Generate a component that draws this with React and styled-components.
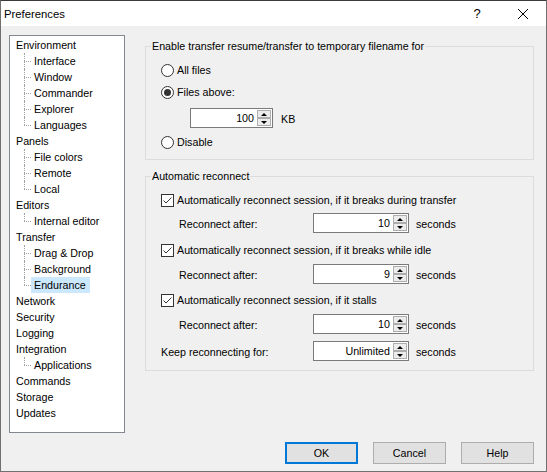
import React from 'react';
import styled, { createGlobalStyle, css } from 'styled-components';

const GlobalStyle = createGlobalStyle`
  html, body {
    margin: 0;
    padding: 0;
    background: #f0f0f0;
  }
  body {
    font-family: "Liberation Sans", Arial, sans-serif;
    font-size: 10.7px;
    color: #000;
  }
`;

const Window = styled.div`
  width: 547px;
  height: 472px;
  box-sizing: border-box;
  border: 1px solid #707070;
  border-top-color: #3a3a3a;
  background: #f0f0f0;
  display: flex;
  flex-direction: column;
`;

const TitleBar = styled.div`
  height: 25px;
  background: #fff;
  display: flex;
  align-items: center;
  padding-left: 3px;
  font-size: 11.3px;
`;

const TitleText = styled.div`
  flex: 1;
`;

const TitleButton = styled.div`
  width: 46px;
  height: 25px;
  display: flex;
  align-items: center;
  justify-content: center;
  font-size: 13px;
`;

const Body = styled.div`
  flex: 1;
  display: flex;
  flex-direction: column;
  padding: 9px 12px 0 8px;
`;

const Main = styled.div`
  display: flex;
  gap: 20px;
  height: 398px;
`;

// navigation tree on the left
const Tree = styled.div`
  width: 116px;
  height: 398px;
  box-sizing: border-box;
  border: 1px solid #828790;
  background: #fff;
  padding-top: 1px;
`;

const TreeItem = styled.div`
  position: relative;
  width: fit-content;
  height: 16px;
  line-height: 17px;
  white-space: nowrap;
  margin-left: ${p => (p.$child ? 21 : 3)}px;
  padding: 0 4px 0 3px;
  background: ${p => (p.$selected ? '#cce8ff' : 'transparent')};

  ${p => p.$child && css`
    &::before {
      content: '';
      position: absolute;
      left: -7px;
      top: 8px;
      width: 7px;
      border-top: 1px dotted #a0a0a0;
    }
    &::after {
      content: '';
      position: absolute;
      left: -7px;
      top: 0;
      height: ${p.$last ? 8 : 16}px;
      border-left: 1px dotted #a0a0a0;
    }
  `}
`;

const Pane = styled.div`
  flex: 1;
  padding-top: 3px;
  display: flex;
  flex-direction: column;
  gap: 8px;
`;

const Group = styled.fieldset`
  margin: 0;
  padding: 0;
  border: 1px solid #dcdcdc;
  min-width: 0;
`;

const Legend = styled.legend`
  margin-left: 5px;
  padding: 0 1px;
  height: 16px;
  line-height: 17px;
`;

const GroupBody = styled.div`
  padding: 8px 0 ${p => p.$bottom}px 15px;
  display: flex;
  flex-direction: column;
`;

const Row = styled.div`
  display: flex;
  align-items: center;
  height: ${p => p.$h || 16}px;
  margin-top: ${p => p.$mt || 0}px;
  margin-left: ${p => p.$ml || 0}px;
  line-height: 17px;
`;

const Label = styled.div`
  box-sizing: border-box;
  width: ${p => p.$w}px;
  padding-left: ${p => p.$indent || 0}px;
  padding-top: 2px;
`;

const RadioCircle = styled.span`
  width: 13px;
  height: 13px;
  box-sizing: border-box;
  border: 1px solid #333;
  border-radius: 50%;
  background: #fff;
  display: flex;
  align-items: center;
  justify-content: center;
  margin-right: 3px;
  flex: none;

  &::after {
    content: '';
    display: ${p => (p.$on ? 'block' : 'none')};
    width: 7px;
    height: 7px;
    border-radius: 50%;
    background: #333;
  }
`;

const CheckBox = styled.span`
  width: 13px;
  height: 13px;
  box-sizing: border-box;
  border: 1px solid #333;
  background: #fff;
  display: flex;
  margin-right: 3px;
  flex: none;
`;

const SpinBox = styled.div`
  width: ${p => p.$w}px;
  height: 20px;
  box-sizing: border-box;
  border: 1px solid #7a7a7a;
  background: #fff;
  display: flex;
  align-items: center;
  flex: none;
`;

const SpinValue = styled.div`
  flex: 1;
  text-align: right;
  padding-right: 3px;
`;

const SpinButtons = styled.div`
  width: 14px;
  height: 16px;
  margin-right: 1px;
  display: flex;
  flex-direction: column;
`;

const SpinArrow = styled.div`
  flex: 1;
  box-sizing: border-box;
  border: 1px solid #adadad;
  background: #ececec;
  display: flex;
  align-items: center;
  justify-content: center;

  &::after {
    content: '';
    border-left: 3px solid transparent;
    border-right: 3px solid transparent;
    ${p => (p.$down ? 'border-top: 3px solid #000;' : 'border-bottom: 3px solid #000;')}
  }
`;

const Unit = styled.div`
  margin-left: ${p => p.$gap}px;
  padding-top: 2px;
`;

const Footer = styled.div`
  display: flex;
  justify-content: flex-end;
  gap: 15px;
  margin-top: 9px;
`;

const Button = styled.button`
  width: 73px;
  height: 22px;
  box-sizing: border-box;
  border: ${p => (p.$primary ? '2px solid #0078d7' : '1px solid #adadad')};
  background: #e1e1e1;
  font: inherit;
  color: #000;
  padding: 0;
`;

const tree = [
  ['Environment', ['Interface', 'Window', 'Commander', 'Explorer', 'Languages']],
  ['Panels', ['File colors', 'Remote', 'Local']],
  ['Editors', ['Internal editor']],
  ['Transfer', ['Drag & Drop', 'Background', 'Endurance']],
  ['Network', []],
  ['Security', []],
  ['Logging', []],
  ['Integration', ['Applications']],
  ['Commands', []],
  ['Storage', []],
  ['Updates', []],
];

function Spin({ width, value }) {
  return (
    <SpinBox $w={width}>
      <SpinValue>{value}</SpinValue>
      <SpinButtons>
        <SpinArrow />
        <SpinArrow $down />
      </SpinButtons>
    </SpinBox>
  );
}

function Check({ children, mt }) {
  return (
    <Row $mt={mt}>
      <CheckBox>
        <svg width="11" height="11" viewBox="0 0 11 11">
          <path d="M1.5 5.5 L4 8 L9.5 2.5" fill="none" stroke="#333" strokeWidth="1" />
        </svg>
      </CheckBox>
      {children}
    </Row>
  );
}

function Radio({ on, children, mt }) {
  return (
    <Row $mt={mt}>
      <RadioCircle $on={on} />
      {children}
    </Row>
  );
}

function ReconnectRow({ label, value, mt, indent }) {
  return (
    <Row $h={20} $mt={mt}>
      <Label $w={152} $indent={indent}>{label}</Label>
      <Spin width={96} value={value} />
      <Unit $gap={7}>seconds</Unit>
    </Row>
  );
}

export default function App() {
  return (
    <>
      <GlobalStyle />
      <Window>
        <TitleBar>
          <TitleText>Preferences</TitleText>
          <TitleButton>?</TitleButton>
          <TitleButton>
            <svg width="10" height="10" viewBox="0 0 10 10">
              <path d="M0 0 L10 10 M10 0 L0 10" stroke="#000" strokeWidth="1" />
            </svg>
          </TitleButton>
        </TitleBar>
        <Body>
          <Main>
            <Tree>
              {tree.map(([name, kids]) => (
                <React.Fragment key={name}>
                  <TreeItem>{name}</TreeItem>
                  {kids.map((kid, i) => (
                    <TreeItem
                      key={kid}
                      $child
                      $last={i === kids.length - 1}
                      $selected={kid === 'Endurance'}
                    >
                      {kid}
                    </TreeItem>
                  ))}
                </React.Fragment>
              ))}
            </Tree>
            <Pane>
              <Group>
                <Legend>Enable transfer resume/transfer to temporary filename for</Legend>
                <GroupBody $bottom={9}>
                  <Radio>All files</Radio>
                  <Radio on mt={6}>Files above:</Radio>
                  <Row $h={20} $mt={8} $ml={29}>
                    <Spin width={83} value="100" />
                    <Unit $gap={8}>KB</Unit>
                  </Row>
                  <Radio mt={6}>Disable</Radio>
                </GroupBody>
              </Group>
              <Group>
                <Legend>Automatic reconnect</Legend>
                <GroupBody $bottom={9}>
                  <Check>Automatically reconnect session, if it breaks during transfer</Check>
                  <ReconnectRow label="Reconnect after:" value="10" mt={5} indent={18} />
                  <Check mt={9}>Automatically reconnect session, if it breaks while idle</Check>
                  <ReconnectRow label="Reconnect after:" value="9" mt={6} indent={18} />
                  <Check mt={8}>Automatically reconnect session, if it stalls</Check>
                  <ReconnectRow label="Reconnect after:" value="10" mt={6} indent={18} />
                  <ReconnectRow label="Keep reconnecting for:" value="Unlimited" mt={7} />
                </GroupBody>
              </Group>
            </Pane>
          </Main>
          <Footer>
            <Button $primary>OK</Button>
            <Button>Cancel</Button>
            <Button>Help</Button>
          </Footer>
        </Body>
      </Window>
    </>
  );
}
